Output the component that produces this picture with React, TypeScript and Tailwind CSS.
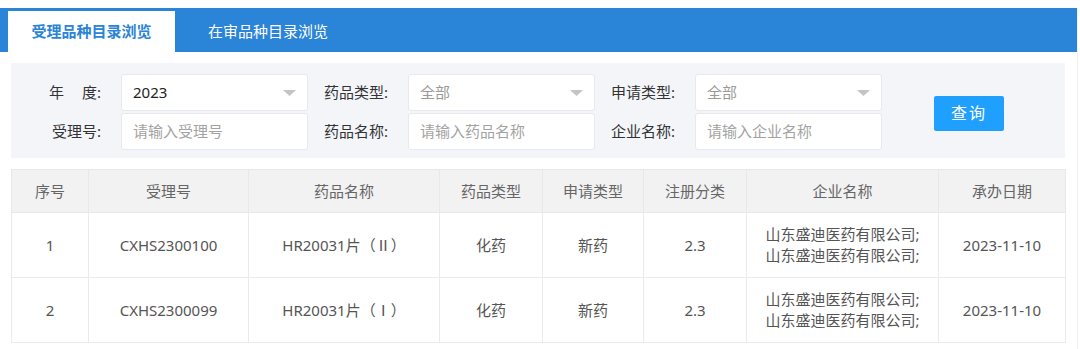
import React from "react";

const font = { fontFamily: '"Noto Sans", "Noto Sans CJK SC", sans-serif' };

function Arrow() {
  return (
    <svg width="13" height="6" viewBox="0 0 13 6" className="shrink-0">
      <polygon points="0,0 13,0 6.5,6" fill="#c4c4c4" />
    </svg>
  );
}

function Select({ value, muted }: { value: string; muted?: boolean }) {
  return (
    <div className="w-[187px] h-[37px] bg-white border border-[#e8e9ee] rounded-[3px] flex items-center justify-between pl-[11px] pr-[11px]">
      <span className={muted ? "text-[#9a9a9a]" : "text-[#222]"}>{value}</span>
      <Arrow />
    </div>
  );
}

function Input({ placeholder }: { placeholder: string }) {
  return (
    <div className="w-[187px] h-[37px] bg-white border border-[#e8e9ee] rounded-[3px] flex items-center pl-[11px]">
      <span className="text-[#a3a3a3]">{placeholder}</span>
    </div>
  );
}

function Label({ children }: { children: React.ReactNode }) {
  return <div className="w-[100px] pr-[20px] text-right text-[#333]">{children}</div>;
}

const cjk = { fontFamily: '"Noto Sans CJK SC", sans-serif' };

const rows = [
  { no: "1", id: "CXHS2300100", roman: "Ⅱ" },
  { no: "2", id: "CXHS2300099", roman: "Ⅰ" },
];

const headers = ["序号", "受理号", "药品名称", "药品类型", "申请类型", "注册分类", "企业名称", "承办日期"];
const widths = [77, 160, 191, 103, 101, 103, 192, 127];

export default function App() {
  return (
    <div className="w-[1080px] h-[349px] bg-white text-[15px] overflow-hidden" style={font}>
      <div className="w-[1078px] h-full border-r border-[#eef0f4]">
        {/* Tabs */}
        <div className="mt-[8px] h-[44px] bg-[#2a84d7] flex items-end">
          <div className="ml-[8px] h-[41px] w-[167px] bg-white flex items-center justify-center text-[#2a84d7] font-bold">
            受理品种目录浏览
          </div>
          <div className="ml-[10px] h-[41px] px-[23px] flex items-center text-white">在审品种目录浏览</div>
        </div>

        {/* Filter panel */}
        <div className="mx-[11px] mt-[11px] w-[1054px] h-[95px] bg-[#f4f5f9] pl-[10px] pt-[11px] flex items-center">
          <div className="flex flex-col gap-[2px] self-start">
            <div className="flex items-center">
              <Label>
                <span className="mr-[18px]">年</span>度:
              </Label>
              <Select value="2023" />
              <Label>药品类型:</Label>
              <Select value="全部" muted />
              <Label>申请类型:</Label>
              <Select value="全部" muted />
            </div>
            <div className="flex items-center">
              <Label>受理号:</Label>
              <Input placeholder="请输入受理号" />
              <Label>药品名称:</Label>
              <Input placeholder="请输入药品名称" />
              <Label>企业名称:</Label>
              <Input placeholder="请输入企业名称" />
            </div>
          </div>
          <button className="ml-[52px] mb-[6px] w-[70px] h-[35px] bg-[#1fa0ff] rounded-[2px] text-white text-[16px] tracking-[2px] flex items-center justify-center">
            查询
          </button>
        </div>

        {/* Table */}
        <div className="mx-[11px] mt-[11px] w-[1054px]">
          <table className="w-[1054px] table-fixed border-collapse text-center">
            <colgroup>
              {widths.map((w, i) => (
                <col key={i} style={{ width: w }} />
              ))}
            </colgroup>
            <thead>
              <tr className="h-[43px] bg-[#f2f2f2]">
                {headers.map((h) => (
                  <th key={h} className="border border-[#e8e8e8] font-normal text-[#666]">
                    {h}
                  </th>
                ))}
              </tr>
            </thead>
            <tbody className="text-[#555]">
              {rows.map((r) => (
                <tr key={r.no} className="h-[65px] bg-white">
                  <td className="border border-[#ebebeb]">{r.no}</td>
                  <td className="border border-[#ebebeb]">{r.id}</td>
                  <td className="border border-[#ebebeb]">
                    HR20031片<span style={cjk}>（{r.roman}）</span>
                  </td>
                  <td className="border border-[#ebebeb]">化药</td>
                  <td className="border border-[#ebebeb]">新药</td>
                  <td className="border border-[#ebebeb]">2.3</td>
                  <td className="border border-[#ebebeb] leading-[21px]">
                    山东盛迪医药有限公司;
                    <br />
                    山东盛迪医药有限公司;
                  </td>
                  <td className="border border-[#ebebeb]">2023-11-10</td>
                </tr>
              ))}
            </tbody>
          </table>
        </div>
      </div>
    </div>
  );
}
